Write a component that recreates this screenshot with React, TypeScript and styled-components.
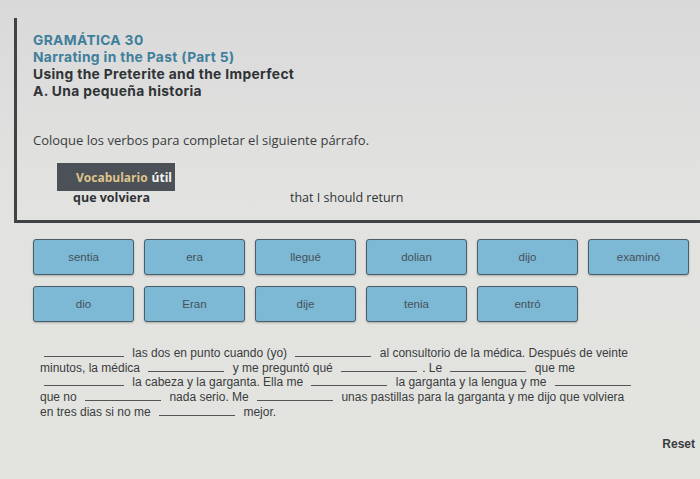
import React from 'react';
import styled, { createGlobalStyle } from 'styled-components';

const GlobalStyle = createGlobalStyle`
  html, body {
    margin: 0;
    padding: 0;
  }
  body {
    width: 700px;
    height: 479px;
    overflow: hidden;
    background: linear-gradient(180deg, #d9d9da 0%, #e2e2e0 40%, #e3e4df 100%);
    font-family: "Liberation Sans", Arial, sans-serif;
  }
`

const Page = styled.div`
  display: flex;
  flex-direction: column;
  height: 479px;
  padding-top: 18px;
  box-sizing: border-box;
`

const Panel = styled.section`
  margin-left: 14px;
  border-left: 3px solid #3f4346;
  border-bottom: 3px solid #3f4346;
  padding: 14px 0 0 16px;
  height: 205px;
  box-sizing: border-box;
  font-family: "Open Sans", "Liberation Sans", sans-serif;
`

const Heading = styled.div<{ $accent?: boolean }>`
  font-family: Inter, "Open Sans", sans-serif;
  font-size: 13.8px;
  font-weight: 700;
  line-height: 17px;
  letter-spacing: 0.35px;
  color: ${p => (p.$accent ? '#3f7f9b' : '#2f3336')};
`

const Instruction = styled.p`
  margin: 32px 0 0;
  font-size: 13px;
  line-height: 16px;
  color: #3a3d40;
`

const VocabBox = styled.div`
  margin: 15px 0 0 24px;
  width: 118px;
  height: 28px;
  background: #4b5156;
  display: flex;
  align-items: center;
  justify-content: flex-end;
  padding-right: 3px;
  box-sizing: border-box;
  font-size: 12px;
  font-weight: 700;
`

const Gold = styled.span`
  color: #dfc48e;
  margin-right: 4px;
`

const White = styled.span`
  color: #f4f4f4;
`

const VocabRow = styled.div`
  display: grid;
  grid-template-columns: 217px auto;
  margin-left: 40px;
  font-size: 12.5px;
  line-height: 13px;
  color: #2f3336;
`

const Term = styled.span`
  font-weight: 700;
`

const Bank = styled.div`
  display: grid;
  grid-template-columns: repeat(6, 101px);
  column-gap: 10px;
  row-gap: 11px;
  margin: 16px 0 0 33px;
`

const Chip = styled.div`
  height: 36px;
  background: #7db8d4;
  border: 1px solid #4a5d6a;
  border-radius: 3px;
  box-shadow: 0 1px 2px rgba(0, 0, 0, 0.25);
  display: flex;
  align-items: center;
  justify-content: center;
  font-size: 11.5px;
  color: #44515a;
  box-sizing: border-box;
`

const Paragraph = styled.p`
  margin: 24px 0 0 40px;
  font-size: 12px;
  line-height: 14.7px;
  color: #3a3c3e;
`

const Blank = styled.span<{ $w?: number }>`
  display: inline-block;
  width: ${p => p.$w ?? 76}px;
  border-bottom: 1px solid #555;
  margin: 0 5px;
  height: 10px;
`

const Footer = styled.div`
  display: flex;
  justify-content: flex-end;
  margin-top: 17px;
  padding-right: 5px;
`

const Reset = styled.button`
  background: none;
  border: none;
  padding: 0;
  font-family: "Liberation Sans", Arial, sans-serif;
  font-size: 12px;
  font-weight: 700;
  color: #3a3c3e;
`

const words = ['sentia', 'era', 'llegué', 'dolian', 'dijo', 'examinó', 'dio', 'Eran', 'dije', 'tenia', 'entró']

const App: React.FC = () => {
  return (
    <>
      <GlobalStyle />
      <Page>
        <Panel>
          <Heading $accent>GRAMÁTICA 30</Heading>
          <Heading $accent>Narrating in the Past (Part 5)</Heading>
          <Heading>Using the Preterite and the Imperfect</Heading>
          <Heading>A. Una pequeña historia</Heading>
          <Instruction>Coloque los verbos para completar el siguiente párrafo.</Instruction>
          <VocabBox>
            <Gold>Vocabulario</Gold>
            <White>útil</White>
          </VocabBox>
          <VocabRow>
            <Term>que volviera</Term>
            <span>that I should return</span>
          </VocabRow>
        </Panel>
        <Bank>
          {words.map(w => (
            <Chip key={w}>{w}</Chip>
          ))}
        </Bank>
        <Paragraph>
          <Blank $w={80} style={{ marginLeft: 4 }} /> las dos en punto cuando (yo) <Blank /> al consultorio de la médica. Después de veinte
          <br />
          minutos, la médica <Blank /> y me preguntó qué <Blank />. Le <Blank /> que me
          <br />
          <Blank $w={80} style={{ marginLeft: 4 }} /> la cabeza y la garganta. Ella me <Blank /> la garganta y la lengua y me <Blank />
          <br />
          que no <Blank /> nada serio. Me <Blank /> unas pastillas para la garganta y me dijo que volviera
          <br />
          en tres dias si no me <Blank /> mejor.
        </Paragraph>
        <Footer>
          <Reset>Reset</Reset>
        </Footer>
      </Page>
    </>
  );
}

export default App;
